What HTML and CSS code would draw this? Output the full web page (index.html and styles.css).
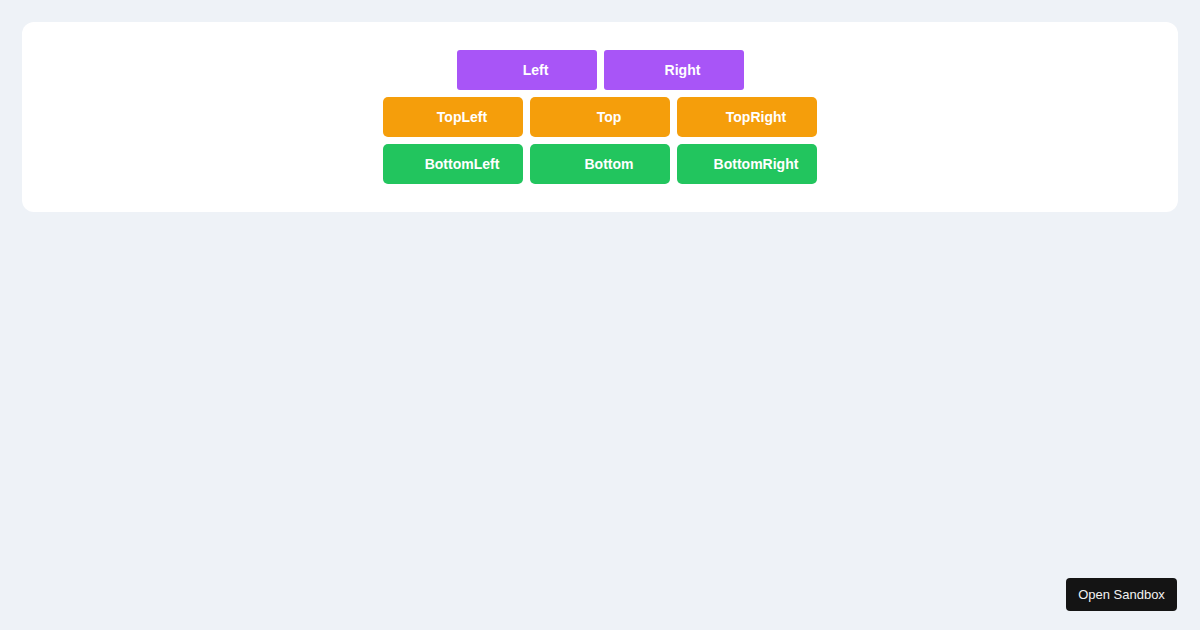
FILE: index.html
```html
<!DOCTYPE html>
<html lang="en">
<head>
<meta charset="utf-8">
<title>Tooltip placements</title>
<link rel="stylesheet" href="styles.css">
</head>
<body>
<main class="card">
  <div class="row">
    <button class="btn btn-purple">Left</button>
    <button class="btn btn-purple">Right</button>
  </div>
  <div class="row">
    <button class="btn btn-orange">TopLeft</button>
    <button class="btn btn-orange">Top</button>
    <button class="btn btn-orange">TopRight</button>
  </div>
  <div class="row">
    <button class="btn btn-green">BottomLeft</button>
    <button class="btn btn-green">Bottom</button>
    <button class="btn btn-green">BottomRight</button>
  </div>
</main>
<button class="sandbox">Open Sandbox</button>
</body>
</html>
```

FILE: styles.css
```css
html, body {
  margin: 0;
  height: 100%;
}
body {
  background: #eef2f7;
  padding: 22px;
  box-sizing: border-box;
  font-family: "Liberation Sans", Arial, sans-serif;
}
.card {
  background: #ffffff;
  border-radius: 12px;
  padding: 28px 0;
  display: flex;
  flex-direction: column;
  align-items: center;
  gap: 7px;
}
.row {
  display: flex;
  gap: 7px;
}
.btn {
  width: 140px;
  height: 40px;
  border: none;
  color: #ffffff;
  font-family: "Liberation Sans", Arial, sans-serif;
  font-weight: bold;
  font-size: 14px;
  padding: 0 0 0 18px;
  border-radius: 5px;
  cursor: pointer;
}
.btn-purple {
  background: #a855f7;
  border-radius: 3px;
}
.btn-orange { background: #f59e0b; }
.btn-green { background: #22c55e; }
.sandbox {
  position: fixed;
  right: 23px;
  bottom: 19px;
  width: 111px;
  height: 33px;
  background: #141414;
  color: #f2f2f2;
  border: none;
  border-radius: 4px;
  font-family: "Liberation Sans", Arial, sans-serif;
  font-size: 13px;
  padding: 0;
}
```
